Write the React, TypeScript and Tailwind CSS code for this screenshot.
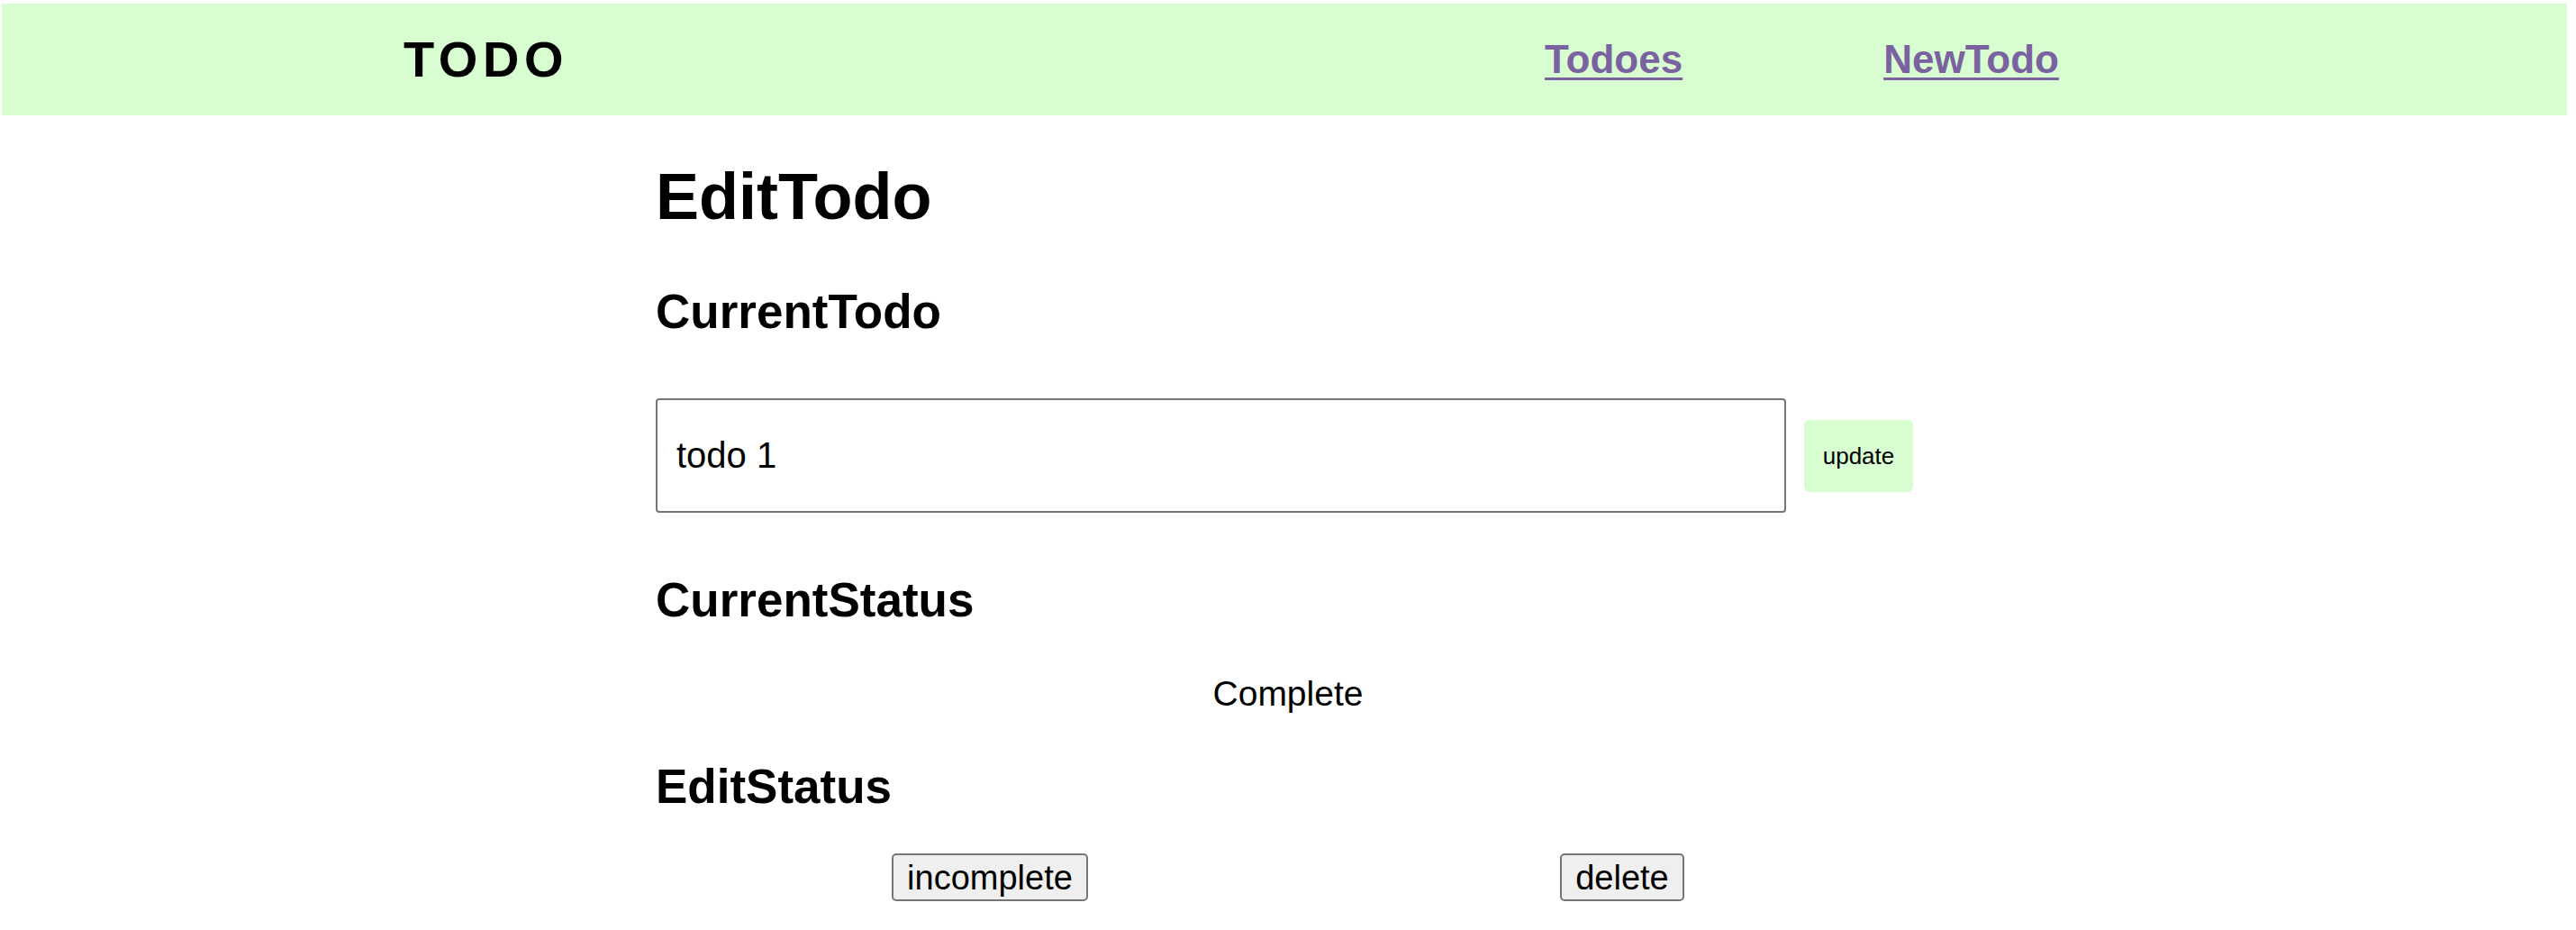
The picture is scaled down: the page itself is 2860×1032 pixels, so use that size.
export default function App() {
  return (
    <div className="min-h-screen bg-white font-['Liberation_Sans',Arial,sans-serif] text-black">
      <header className="ml-[2px] mr-[10px] mt-[4px] flex h-[124px] items-center bg-[#d7fdd0] pl-[446px]">
        <div className="w-[1267px] text-[56px] font-bold leading-none tracking-[0.1em]">TODO</div>
        <nav className="flex gap-[223px] text-[44px] font-bold leading-none">
          <a href="#" className="text-[#7a62a0] underline decoration-[3px] underline-offset-[5px]">
            Todoes
          </a>
          <a href="#" className="text-[#7a62a0] underline decoration-[3px] underline-offset-[5px]">
            NewTodo
          </a>
        </nav>
      </header>

      <main className="mx-auto w-[1404px]">
        <h1 className="mt-[54px] text-[72px] font-bold leading-none">EditTodo</h1>

        <h2 className="mt-[65px] text-[53px] font-bold leading-none">CurrentTodo</h2>
        <div className="mt-[70px] flex items-center gap-[20px]">
          <input
            defaultValue="todo 1"
            className="h-[127px] w-[1255px] rounded-[4px] border-2 border-[#767676] px-[21px] text-[40px] outline-none"
          />
          <button className="h-[80px] w-[121px] rounded-[6px] bg-[#d7fdd0] text-[26px] leading-none">
            update
          </button>
        </div>

        <h2 className="mt-[70px] text-[53px] font-bold leading-none">CurrentStatus</h2>
        <p className="mt-[58px] text-center text-[39px] leading-none">Complete</p>

        <h2 className="mt-[57px] text-[53px] font-bold leading-none">EditStatus</h2>
        <div className="ml-[20px] mt-[48px] flex w-[1404px]">
          <div className="flex flex-1 justify-center">
            <button className="h-[53px] rounded-[5px] border-2 border-[#767676] bg-[#efefef] px-[15px] text-[38px] leading-none">
              incomplete
            </button>
          </div>
          <div className="flex flex-1 justify-center">
            <button className="h-[53px] rounded-[5px] border-2 border-[#767676] bg-[#efefef] px-[15px] text-[38px] leading-none">
              delete
            </button>
          </div>
        </div>
      </main>
    </div>
  );
}
